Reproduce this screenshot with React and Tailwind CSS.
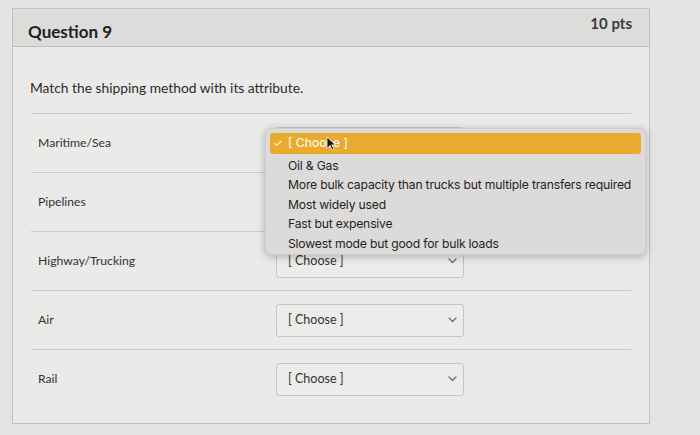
import React from "react";

const rows = ["Maritime/Sea", "Pipelines", "Highway/Trucking", "Air", "Rail"];
const options = [
  "Oil & Gas",
  "More bulk capacity than trucks but multiple transfers required",
  "Most widely used",
  "Fast but expensive",
  "Slowest mode but good for bulk loads",
];

function Chevron() {
  return (
    <svg width="9" height="6" viewBox="0 0 9 6" fill="none">
      <path d="M1 1l3.5 3.5L8 1" stroke="#6b6b6b" strokeWidth="1.2" strokeLinecap="round" strokeLinejoin="round" />
    </svg>
  );
}

// selects under the open menu keep their box but their text is covered
function Select({ covered }) {
  return (
    <div className="w-[188px] h-[33px] border border-[#c6c6c4] rounded-[3px] bg-[#ececea] flex items-center justify-between pl-[11px] pr-[6px] text-[12.5px] text-[#333]">
      <span className={covered ? "invisible" : ""}>[ Choose ]</span>
      <Chevron />
    </div>
  );
}

export default function App() {
  return (
    <div
      className="relative w-[700px] h-[435px] overflow-hidden bg-[#e4e4e2] pt-2 pl-3"
      style={{ fontFamily: "Lato, 'Open Sans', sans-serif" }}
    >
      <div className="w-[638px] h-[416px] border border-[#c2c2c0] bg-[#eaeae8]">
        {/* header */}
        <div className="h-[38px] bg-[#dcdcda] border-b border-[#bdbdbb] flex justify-between px-[15px] text-[#222]">
          <div className="font-bold text-[17px] pt-[10px]">Question 9</div>
          <div className="font-bold text-[15px] text-[#3a3a3a] pr-[2px] pt-[3px]">10 pts</div>
        </div>

        {/* body */}
        <div className="pl-[17px] pt-[31px] pb-[15px] text-[13.8px] leading-[20px] text-[#2a2a2a]">
          Match the shipping method with its attribute.
        </div>

        <div className="ml-[18px] w-[600px]">
          {rows.map((r, i) => (
            <div key={r} className="h-[59px] border-t border-[#c9c9c7] flex items-center">
              <div className="w-[245px] pl-[7px] text-[12.2px] text-[#333]">{r}</div>
              <Select covered={i < 2} />
            </div>
          ))}
        </div>
      </div>

      {/* open dropdown menu */}
      <div
        className="absolute left-[265px] top-[128px] w-[381px] h-[127px] rounded-[6px] bg-[#dcdbd9] border border-[#cfcecc] shadow-[0_2px_8px_rgba(0,0,0,0.25)] pt-[4px] px-[4px] text-[12.2px] text-[#1f1f1f]"
        style={{ fontFamily: "Inter, 'Liberation Sans', sans-serif" }}
      >
        <div className="h-[21px] rounded-[3px] bg-[#e8ab2e] flex items-center pl-[3px] text-white">
          <span className="w-[15px] text-[11px]">✓</span>
          <span>[ Choose ]</span>
        </div>
        <div className="pt-[2px]">
          {options.map((o) => (
            <div key={o} className="h-[19.6px] flex items-center pl-[18px] whitespace-nowrap tracking-[-0.2px]">
              {o}
            </div>
          ))}
        </div>
      </div>

      {/* mouse cursor */}
      <svg className="absolute left-[326px] top-[136px]" width="10" height="15" viewBox="0 0 10 15">
        <path d="M1 1v11.5l3-3 2 4.5 1.8-.8-2-4.3H9.5z" fill="#111" stroke="#fff" strokeWidth="0.8" />
      </svg>
    </div>
  );
}
